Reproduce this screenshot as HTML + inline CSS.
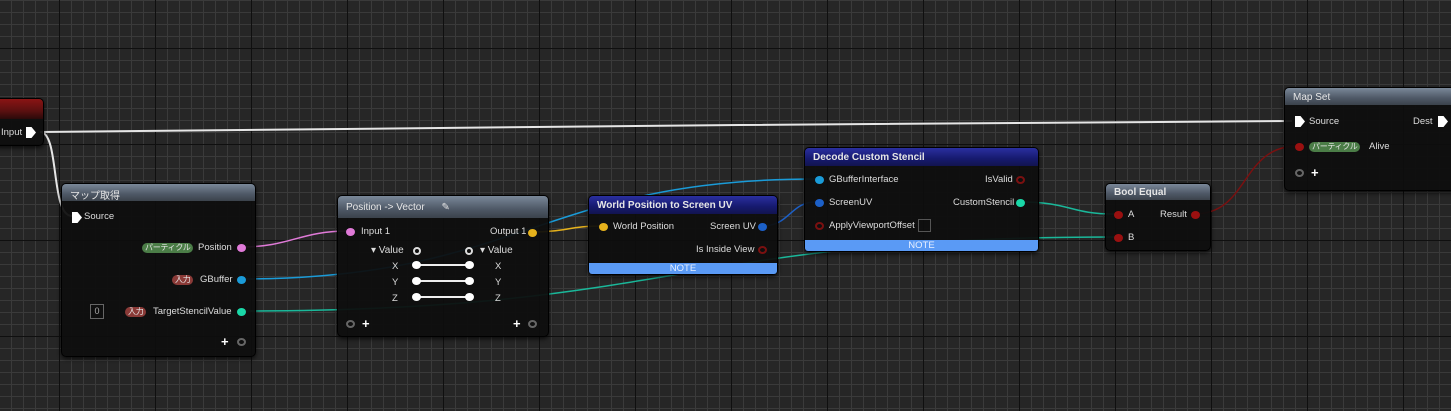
<!DOCTYPE html>
<html><head><meta charset="utf-8"><style>
*{margin:0;padding:0;box-sizing:border-box}
body{width:1451px;height:411px;overflow:hidden;position:relative;font-family:"Liberation Sans","Noto Sans CJK JP",sans-serif;color:#ddd;font-size:9.5px;
background-color:#262626;
background-image:
linear-gradient(90deg,#0f0f0f 1px,transparent 1px),
linear-gradient(0deg,#0f0f0f 1px,transparent 1px),
linear-gradient(90deg,#3a3a3a 1px,transparent 1px),
linear-gradient(0deg,#3a3a3a 1px,transparent 1px);
background-size:96px 96px,96px 96px,12px 12px,12px 12px;
background-position:59px 0,0 49px,11px 0,0 1px;}
.n{position:absolute;background:rgba(14,14,14,.94);border-radius:5px;box-shadow:0 2px 4px rgba(0,0,0,.7);border:1px solid #000}
.h{position:absolute;left:0;right:0;top:0;height:18px;border-radius:4px 4px 0 0;padding:4px 0 0 8px;font-size:10px;font-weight:bold;color:#e6e6e6}
.gray{background:linear-gradient(180deg,#7a8899,#4e5866 60%,#3b424b)}
.blue{background:linear-gradient(180deg,#2a2fa0,#161a6e 60%,#121450)}
.t{position:absolute;white-space:nowrap;line-height:10px;color:#ddd}
.p{position:absolute;width:9px;height:8px;border-radius:50%}
.po{position:absolute;width:9px;height:8px;border-radius:50%;border:2px solid}
.ex{position:absolute;width:10px;height:11px;background:#fff;clip-path:polygon(0 0,55% 0,100% 50%,55% 100%,0 100%)}
.tag{position:absolute;height:10px;border-radius:5px;font-size:8px;line-height:10px;padding:0 3px;color:#e6e6e6;letter-spacing:-0.3px}
.g{background:#4b7d47}.r{background:#8a3a37}
.note{position:absolute;left:0;right:0;bottom:0;height:11px;background:#5a9af5;color:#e8f0ff;text-align:center;font-size:9.5px;line-height:11px;border-radius:0 0 3px 3px}
.plus{position:absolute;font-weight:bold;color:#fff;font-size:13px;line-height:10px}
</style></head><body>
<svg width="1451" height="411" style="position:absolute;left:0;top:0" fill="none">
<path d="M40 132 C400 128 900 123 1292 121" stroke="#e6e6e6" stroke-width="2"/>
<path d="M40 132 C60 132 50 216 72 216" stroke="#e6e6e6" stroke-width="2"/>
<path d="M241 247 C290 247 300 231 348 231" stroke="#e07ad8" stroke-width="1.5"/>
<path d="M241 279 C520 279 540 179 816 179" stroke="#1a9bd8" stroke-width="1.5"/>
<path d="M241 311 C680 311 680 237 1114 237" stroke="#1ab89a" stroke-width="1.5"/>
<path d="M532 232 C565 232 570 226 602 226" stroke="#e6b21c" stroke-width="1.5"/>
<path d="M762 226 C790 226 790 202 816 202" stroke="#1c60c8" stroke-width="1.5"/>
<path d="M1021 202 C1070 202 1070 214 1114 214" stroke="#1ab89a" stroke-width="1.5"/>
<path d="M1194 214 C1250 214 1240 146 1298 146" stroke="#7a1010" stroke-width="1.5"/>
</svg>

<div class="n" style="left:-6px;top:98px;width:50px;height:48px">
<div class="h" style="height:20px;background:linear-gradient(180deg,#8a1414,#5a1010 60%,#2a0a0a)"></div>
<div class="t" style="left:6px;top:29px">Input</div>
<div class="ex" style="left:31px;top:28px"></div>
</div>

<div class="n" style="left:61px;top:183px;width:195px;height:174px">
<div class="h gray" style="height:17px;padding-top:3px;font-weight:normal">マップ取得</div>
<div class="ex" style="left:10px;top:28px"></div><div class="t" style="left:22px;top:28px">Source</div>
<div class="tag g" style="left:80px;top:59px">パーティクル</div><div class="t" style="left:136px;top:59px">Position</div>
<div class="p" style="left:175px;top:60px;background:#e07ad8"></div>
<div class="tag r" style="left:110px;top:91px">入力</div><div class="t" style="left:138px;top:91px">GBuffer</div>
<div class="p" style="left:175px;top:92px;background:#1a9bd8"></div>
<div style="position:absolute;left:28px;top:120px;width:14px;height:15px;border:1px solid #666;color:#aaa;font-size:9px;text-align:center;line-height:13px">0</div>
<div class="tag r" style="left:63px;top:123px">入力</div><div class="t" style="left:91px;top:123px">TargetStencilValue</div>
<div class="p" style="left:175px;top:124px;background:#1ad8a8"></div>
<div class="plus" style="left:159px;top:153px">+</div>
<div class="po" style="left:175px;top:154px;border-color:#666"></div>
</div>

<div class="n" style="left:337px;top:195px;width:212px;height:142px">
<div class="h gray" style="height:22px;padding-top:6px;font-weight:normal">Position -&gt; Vector <span style="margin-left:14px">✎</span></div>
<div class="p" style="left:8px;top:32px;background:#e07ad8"></div><div class="t" style="left:23px;top:31px">Input 1</div>
<div class="t" style="left:152px;top:31px">Output 1</div><div class="p" style="left:190px;top:33px;background:#e6b21c"></div>
<div class="t" style="left:33px;top:50px;font-size:10px">▾ Value</div>
<div class="po" style="left:75px;top:51px;width:8px;height:8px;border-color:#ddd"></div>
<div class="po" style="left:127px;top:51px;width:8px;height:8px;border-color:#ddd"></div>
<div class="t" style="left:142px;top:50px;font-size:10px">▾ Value</div>
<div class="t" style="left:54px;top:66px">X</div><div class="t" style="left:54px;top:82px">Y</div><div class="t" style="left:54px;top:98px">Z</div>
<div class="t" style="left:157px;top:66px">X</div><div class="t" style="left:157px;top:82px">Y</div><div class="t" style="left:157px;top:98px">Z</div>
<div style="position:absolute;left:78px;top:68px;width:54px;height:2px;background:#eee"></div>
<div style="position:absolute;left:78px;top:84px;width:54px;height:2px;background:#eee"></div>
<div style="position:absolute;left:78px;top:100px;width:54px;height:2px;background:#eee"></div>
<div class="p" style="left:74px;top:65px;background:#fff"></div><div class="p" style="left:127px;top:65px;background:#fff"></div>
<div class="p" style="left:74px;top:81px;background:#fff"></div><div class="p" style="left:127px;top:81px;background:#fff"></div>
<div class="p" style="left:74px;top:97px;background:#fff"></div><div class="p" style="left:127px;top:97px;background:#fff"></div>
<div class="po" style="left:8px;top:124px;border-color:#666"></div><div class="plus" style="left:24px;top:123px">+</div>
<div class="plus" style="left:175px;top:123px">+</div><div class="po" style="left:190px;top:124px;border-color:#666"></div>
</div>

<div class="n" style="left:588px;top:195px;width:190px;height:80px">
<div class="h blue" style="height:18px">World Position to Screen UV</div>
<div class="p" style="left:10px;top:27px;background:#e6b21c"></div><div class="t" style="left:24px;top:26px">World Position</div>
<div class="t" style="left:121px;top:26px">Screen UV</div><div class="p" style="left:169px;top:27px;background:#1c60c8"></div>
<div class="t" style="left:107px;top:49px">Is Inside View</div><div class="po" style="left:169px;top:50px;border-color:#7a1010"></div>
<div class="note">NOTE</div>
</div>

<div class="n" style="left:804px;top:147px;width:235px;height:105px">
<div class="h blue" style="height:18px">Decode Custom Stencil</div>
<div class="p" style="left:10px;top:28px;background:#1a9bd8"></div><div class="t" style="left:24px;top:27px">GBufferInterface</div>
<div class="t" style="left:180px;top:27px">IsValid</div><div class="po" style="left:211px;top:28px;border-color:#7a1010"></div>
<div class="p" style="left:10px;top:51px;background:#1c60c8"></div><div class="t" style="left:24px;top:50px">ScreenUV</div>
<div class="t" style="left:148px;top:50px">CustomStencil</div><div class="p" style="left:211px;top:51px;background:#1ad8a8"></div>
<div class="po" style="left:10px;top:74px;border-color:#7a1010"></div><div class="t" style="left:24px;top:73px">ApplyViewportOffset</div>
<div style="position:absolute;left:113px;top:71px;width:13px;height:13px;border:1px solid #555"></div>
<div class="note">NOTE</div>
</div>

<div class="n" style="left:1105px;top:183px;width:106px;height:68px">
<div class="h gray" style="height:16px;padding-top:3px">Bool Equal</div>
<div class="p" style="left:8px;top:27px;background:#9a1010"></div><div class="t" style="left:22px;top:26px">A</div>
<div class="t" style="left:54px;top:26px">Result</div><div class="p" style="left:85px;top:27px;background:#9a1010"></div>
<div class="p" style="left:8px;top:50px;background:#9a1010"></div><div class="t" style="left:22px;top:49px">B</div>
</div>

<div class="n" style="left:1284px;top:87px;width:175px;height:104px">
<div class="h gray" style="height:17px;padding-top:4px;font-weight:normal">Map Set</div>
<div class="ex" style="left:10px;top:28px"></div><div class="t" style="left:24px;top:29px">Source</div>
<div class="t" style="left:128px;top:29px">Dest</div><div class="ex" style="left:153px;top:28px"></div>
<div class="p" style="left:10px;top:55px;background:#9a1010"></div>
<div class="tag g" style="left:24px;top:54px">パーティクル</div><div class="t" style="left:84px;top:54px">Alive</div>
<div class="po" style="left:10px;top:81px;border-color:#666"></div><div class="plus" style="left:26px;top:80px">+</div>
</div>
</body></html>
